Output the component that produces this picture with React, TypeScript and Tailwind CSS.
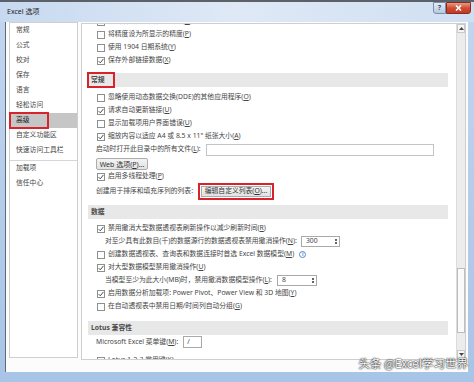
import React from 'react';

const font = "font-['Noto_Sans','Noto_Sans_CJK_SC',sans-serif]";

function Check({ on }: { on?: boolean }) {
  return (
    <span className="relative w-[8px] h-[8px] border border-[#8e8f8f] bg-white shrink-0 flex items-center justify-center">
      {on && (
        <svg width="6" height="6" viewBox="0 0 6 6">
          <path d="M0.6 3.1 L2.3 4.8 L5.4 0.9" fill="none" stroke="#4a4a4a" strokeWidth="1" />
        </svg>
      )}
    </span>
  );
}

function Key({ k }: { k: string }) {
  return (
    <>
      (<span className="underline">{k}</span>)
    </>
  );
}

function CheckRow({ on, children }: { on?: boolean; children: React.ReactNode }) {
  return (
    <div className="h-[13px] flex items-center pl-[9px] gap-[3px]">
      <Check on={on} />
      <span className="whitespace-nowrap">{children}</span>
    </div>
  );
}

function Band({ children }: { children: React.ReactNode }) {
  return (
    <div className="h-[14px] bg-[#e8e8e8] flex items-center pl-[3px] font-bold text-[#4a4a4a]">
      {children}
    </div>
  );
}

function Spin({ value, w }: { value: string; w: string }) {
  return (
    <span className={`${w} h-[11px] border border-[#a9a9a9] bg-white flex items-center justify-between pl-[4px] pr-[2px]`}>
      <span>{value}</span>
      <span className="flex flex-col gap-[1px] text-[#555] leading-none">
        <span className="block w-[2px] h-[2px] bg-[#666]" />
        <span className="block w-[2px] h-[2px] bg-[#666]" />
      </span>
    </span>
  );
}

const navTop = ['常规', '公式', '校对', '保存', '语言', '轻松访问'];
const navMid = ['自定义功能区', '快速访问工具栏'];
const navBottom = ['加载项', '信任中心'];

export default function App() {
  return (
    <div className={`${font} w-[474px] h-[382px] overflow-hidden flex flex-col bg-gradient-to-b from-[#c3d6ee] to-[#a8c4e6] relative`}>
      {/* title bar */}
      <div className="h-[22px] shrink-0 border-t-2 border-[#5c6169] bg-gradient-to-r from-[#c7d9f0] via-[#dfe9f6] to-[#cfdff2] flex items-start relative">
        <span className="text-[7px] text-[#1e1e1e] pl-[7px] pt-[5px]">Excel 选项</span>
        <div className="ml-auto flex mr-[3px]">
          <div className="w-[13px] h-[12px] border border-[#7d8fa8] rounded-bl-[3px] bg-gradient-to-b from-[#e4ecf6] to-[#b6c8df] flex items-center justify-center text-[7px] font-bold text-[#3a4a60]">
            ?
          </div>
          <div className="w-[25px] h-[12px] border border-[#8a2a20] rounded-br-[3px] bg-gradient-to-b from-[#e69a86] via-[#d24a33] to-[#c13a22] flex items-center justify-center">
            <svg width="7" height="6" viewBox="0 0 7 6">
              <path d="M1 0.5 L6 5.5 M6 0.5 L1 5.5" stroke="#fff" strokeWidth="1.6" />
            </svg>
          </div>
        </div>
      </div>

      {/* body */}
      <div className="flex-1 px-[6px] pb-[10px] flex">
        <div className="flex-1 border-l border-[#5a6b80] -ml-[1px] bg-[#fcfcfc] flex items-start pl-[3px] gap-[3px] text-[6.8px] text-[#464646] leading-none">
          {/* nav */}
          <div className="w-[69px] h-[336px] border border-[#cfcfcf] bg-white flex flex-col">
            {navTop.map((n) => (
              <div key={n} className="h-[15px] flex items-center px-[6px] whitespace-nowrap">
                {n}
              </div>
            ))}
            <div className="h-[15px] flex items-center px-[6px] bg-[#c6c6c6] text-[#222] relative">
              高级
              <span className="absolute -left-[1px] -top-[1px] w-[40px] h-[17px] border-2 border-[#d8232a]" />
            </div>
            {navMid.map((n) => (
              <div key={n} className="h-[15px] flex items-center px-[6px] whitespace-nowrap">
                {n}
              </div>
            ))}
            <div className="mt-[2px] h-[1px] bg-[#d6d6d6]" />
            {navBottom.map((n) => (
              <div key={n} className="h-[15px] flex items-center px-[6px] whitespace-nowrap">
                {n}
              </div>
            ))}
          </div>

          {/* content */}
          <div className="w-[385px] h-[337px] mt-[1px] border border-[#cfcfcf] bg-white flex">
            <div className="flex-1 overflow-hidden pl-[6px] pr-[8px]">
              <div className="-mt-[9px] flex flex-col">
                <CheckRow on>更新指向其他文档的链接<Key k="D" /></CheckRow>
                <CheckRow>将精度设为所显示的精度<Key k="P" /></CheckRow>
                <CheckRow>使用 1904 日期系统<Key k="Y" /></CheckRow>
                <CheckRow on>保存外部链接数据<Key k="X" /></CheckRow>

                <div className="mt-[6px] relative">
                  <Band>常规</Band>
                  <span className="absolute -left-[1px] -top-[1px] w-[28px] h-[16px] border-2 border-[#d8232a]" />
                </div>

                <div className="mt-[4px]" />
                <CheckRow>忽略使用动态数据交换(DDE)的其他应用程序<Key k="O" /></CheckRow>
                <CheckRow on>请求自动更新链接<Key k="U" /></CheckRow>
                <CheckRow>显示加载项用户界面错误<Key k="U" /></CheckRow>
                <CheckRow on>缩放内容以适应 A4 或 8.5 x 11" 纸张大小<Key k="A" /></CheckRow>
                <div className="h-[13px] flex items-center pl-[8px]">
                  <span className="whitespace-nowrap">启动时打开此目录中的所有文件<Key k="L" />:</span>
                  <span className="ml-[5px] w-[228px] h-[12px] border border-[#c4c4c4] bg-white" />
                </div>
                <div className="mt-[2px] h-[12px] flex pl-[8px]">
                  <span className="w-[52px] h-[12px] border border-[#acacac] rounded-[2px] bg-gradient-to-b from-[#f4f4f4] to-[#e2e2e2] flex items-center justify-center text-[7px] text-[#333] whitespace-nowrap">
                    Web 选项<Key k="P" />...
                  </span>
                </div>
                <CheckRow on>启用多线程处理<Key k="P" /></CheckRow>
                <div className="h-[17px] flex items-center pl-[8px]">
                  <span className="whitespace-nowrap">创建用于排序和填充序列的列表:</span>
                  <span className="ml-[5px] w-[76px] h-[17px] border-2 border-[#d8232a] p-[1px] flex">
                    <span className="flex-1 border border-[#acacac] bg-gradient-to-b from-[#f4f4f4] to-[#e2e2e2] flex items-center justify-center text-[#333] whitespace-nowrap">
                      编辑自定义列表<Key k="O" />...
                    </span>
                  </span>
                </div>

                <div className="mt-[5px]">
                  <Band>数据</Band>
                </div>
                <div className="mt-[3px]" />
                <CheckRow on>禁用撤消大型数据透视表刷新操作以减少刷新时间<Key k="R" /></CheckRow>
                <div className="h-[13px] flex items-center pl-[17px]">
                  <span className="whitespace-nowrap">对至少具有此数目(千)的数据源行的数据透视表禁用撤消操作<Key k="N" />:</span>
                  <span className="ml-[4px] flex">
                    <Spin value="300" w="w-[39px]" />
                  </span>
                </div>
                <div className="h-[13px] flex items-center pl-[9px] gap-[3px]">
                  <Check />
                  <span className="whitespace-nowrap">创建数据透视表、查询表和数据连接时首选 Excel 数据模型<Key k="M" /></span>
                  <span className="ml-[2px] w-[7px] h-[7px] rounded-full border border-[#4b8bd6] text-[#4b8bd6] text-[5px] font-bold flex items-center justify-center">
                    i
                  </span>
                </div>
                <CheckRow on>对大型数据模型禁用撤消操作<Key k="U" /></CheckRow>
                <div className="h-[13px] flex items-center pl-[17px]">
                  <span className="whitespace-nowrap">当模型至少为此大小(MB)时，禁用撤消数据模型操作<Key k="L" />:</span>
                  <span className="ml-[5px] flex">
                    <Spin value="8" w="w-[40px]" />
                  </span>
                </div>
                <CheckRow on>启用数据分析加载项: Power Pivot、Power View 和 3D 地图<Key k="Y" /></CheckRow>
                <CheckRow>在自动透视表中禁用日期/时间列自动分组<Key k="G" /></CheckRow>

                <div className="mt-[8px]">
                  <Band>Lotus 兼容性</Band>
                </div>
                <div className="h-[14px] flex items-center pl-[8px]">
                  <span className="whitespace-nowrap">Microsoft Excel 菜单键<Key k="M" />:</span>
                  <span className="ml-[5px] w-[19px] h-[12px] border border-[#a9a9a9] bg-white flex items-center pl-[3px]">/</span>
                </div>
                <div className="mt-[5px]" />
                <CheckRow>Lotus 1-2-3 常用键<Key k="K" /></CheckRow>
              </div>
            </div>

            {/* scrollbar */}
            <div className="w-[9px] bg-[#ececec] border-l border-[#dcdcdc] flex flex-col">
              <div className="h-[9px] border border-[#c9c9c9] bg-[#f5f5f5] flex items-center justify-center">
                <svg width="5" height="3" viewBox="0 0 5 3">
                  <path d="M0 3 L2.5 0 L5 3 Z" fill="#444" />
                </svg>
              </div>
              <div className="h-[235px]" />
              <div className="h-[65px] border border-[#bdbdbd] bg-[#fafafa]" />
              <div className="flex-1" />
              <div className="h-[9px] border border-[#c9c9c9] bg-[#f5f5f5] flex items-center justify-center">
                <svg width="5" height="3" viewBox="0 0 5 3">
                  <path d="M0 0 L2.5 3 L5 0 Z" fill="#444" />
                </svg>
              </div>
            </div>
          </div>
        </div>
      </div>

      {/* watermark */}
      <div className="absolute right-[6px] bottom-[10px] text-[11.5px] text-white font-['Noto_Sans_CJK_SC',sans-serif] whitespace-nowrap [text-shadow:0_0_2px_#000,0_0_1px_#000]">
        头条 @Excel学习世界
      </div>
    </div>
  );
}
